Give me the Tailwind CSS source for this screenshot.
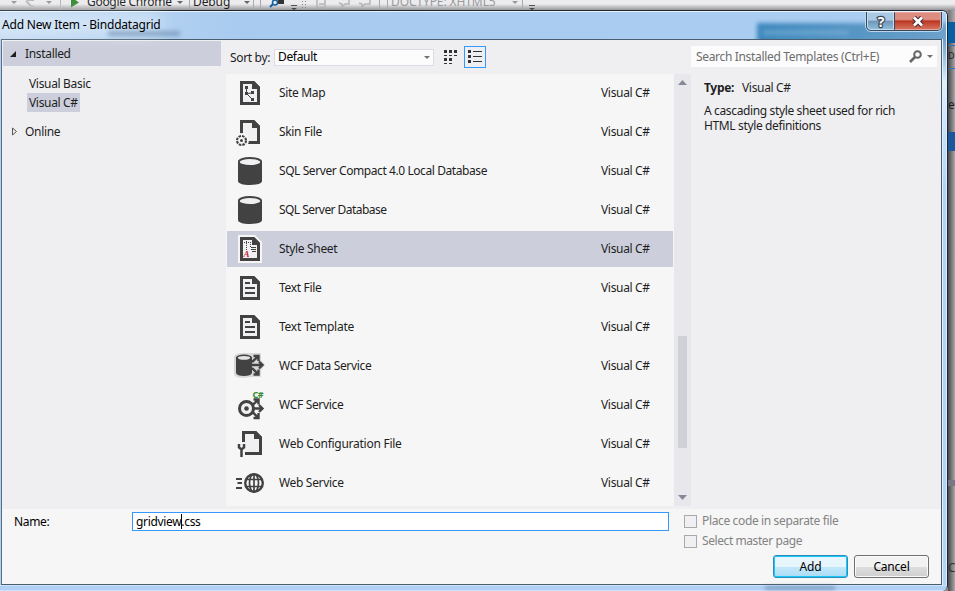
<!DOCTYPE html>
<html lang="en">
<head>
    <meta charset="UTF-8">
    <meta name="viewport" content="width=device-width, initial-scale=1.0">
    <title>Add New Item - Binddatagrid</title>
    <script src="https://cdn.jsdelivr.net/npm/@tailwindcss/browser@4"></script>
</head>
<body class="h-[591px] w-[955px] overflow-hidden bg-[#8e8e90] font-['Noto_Sans','Open_Sans',sans-serif] text-[12px] leading-4 tracking-[-0.33px] text-[#1e1e1e]">
    <!-- shared icon shapes -->
    <svg class="hidden">
        <defs>
            <g id="doc">
                <path d="M9.5 7.5H21.5L26.5 12.5V28.5H9.5Z" fill="#f0eff1" stroke="#424242" stroke-width="3"/>
                <path d="M20 6H22L28 12V14H20Z" fill="#424242"/>
            </g>
            <g id="db">
                <path d="M6 8V28C6 30.5 11 32 18 32S30 30.5 30 28V8Z" fill="#424242"/>
                <ellipse cx="18" cy="8.5" rx="12" ry="4.5" fill="#424242"/>
                <ellipse cx="18" cy="9" rx="10.3" ry="3" fill="#f0eff1"/>
            </g>
            <g id="arrows" fill="none" stroke="#424242" stroke-width="2.4">
                <path d="M20 17H30M27 13.5L30.5 17L27 20.5M20 14L26 8.5M21.5 8H26.5V13M20 20L26 26M21.5 26.5H26.5V21.5"/>
            </g>
            <g id="textdoc">
                <use href="#doc"/>
                <path d="M13 13H18M13 18H23M13 23H23" stroke="#424242" stroke-width="2"/>
            </g>
        </defs>
    </svg>

    <!-- IDE toolbar behind the dialog -->
    <div class="flex h-[10px] items-start overflow-hidden bg-linear-to-b from-[#ececee] from-40% to-[#98989a]">
        <svg class="h-[10px] w-[70px] shrink-0" viewBox="0 0 70 10"><path d="M11 1H17L14 4ZM46 1H52L49 4Z" fill="#99999b"/><path d="M26 1L31 6L34 7M27 0H34" fill="none" stroke="#b9b9bb" stroke-width="2"/><path d="M60.500 0V10" stroke="#b5b5b7"/></svg>
        <svg class="h-[10px] w-[17px] shrink-0" viewBox="0 0 17 10"><path d="M1 -3V7.500L9 2.500Z" fill="#388a34"/></svg>
        <span class="-mt-[6px] w-[89px] shrink-0 tracking-[-0.3px]">Google Chrome</span>
        <svg class="h-[10px] w-[17px] shrink-0" viewBox="0 0 17 10"><path d="M1 1H7L4 4Z" fill="#666"/><path d="M13.500 0V9" stroke="#a9a9ab"/></svg>
        <span class="-mt-[6px] w-[49px] shrink-0 tracking-[-0.1px]">Debug</span>
        <svg class="h-[10px] w-[148px] shrink-0" viewBox="0 0 148 10">
            <path d="M2 1H8L5 4Z" fill="#666"/><path d="M11.500 0V9M18.500 0V9M137.500 0V10M145.500 0V10" stroke="#a9a9ab"/>
            <path d="M36 0H42V4H36Z" fill="#333"/><circle cx="33" cy="2.500" r="2.500" fill="none" stroke="#15609e" stroke-width="1.500"/><path d="M31 4L28 7" stroke="#15609e" stroke-width="2"/>
            <path d="M49 5.500H55" stroke="#555"/><path d="M49 8H55L52 10Z" fill="#444"/>
            <path d="M60.500 1V10M63.500 1V10" stroke="#888" stroke-dasharray="1 2"/>
            <path d="M75 0V7.500H83V0M77 4H82M97 3L100 4V7L103 4H107V0M117 3L120 4V7L123 4H128V0" fill="none" stroke="#b4b4b6" stroke-width="1.500"/>
        </svg>
        <span class="-mt-[6px] w-[120px] shrink-0 pl-px tracking-[-0.1px] text-[#9a9a9c]">DOCTYPE: XHTML5</span>
        <svg class="h-[10px] w-[40px] shrink-0" viewBox="0 0 40 10"><path d="M2 1H8L5 4Z" fill="#999"/><path d="M12.500 0V10" stroke="#a9a9ab"/><path d="M19 5.500H25" stroke="#555"/><path d="M19 8H25L22 10Z" fill="#444"/></svg>
    </div>

    <div class="flex h-[581px]">
        <!-- dialog window -->
        <div class="flex w-[948px] shrink-0 flex-col rounded-tr-[6px] rounded-br-[6px] border-t border-r border-[#1c2530] bg-[#b0d1f5]">
            <div class="flex h-[28px] shrink-0 rounded-tr-[5px] border-t border-r border-[#e8f3fe] bg-linear-to-r from-[#c3dbf4] via-[#a9cbef] via-25% to-[#aacdf2] text-black">
                <div class="relative w-[753px] pt-[5px] pl-[2px] tracking-[-0.2px]">
                    <div class="absolute top-0 -left-3 h-6 w-44 rounded-full bg-white/35 blur-[8px]"></div>
                    <div class="absolute top-[19px] left-[108px] h-[5px] w-[72px] bg-[#5d7ea2]/55 blur-[2px]"></div>
                    <span class="relative">Add New Item - Binddatagrid</span>
                </div>
                <div class="relative flex grow justify-end overflow-hidden rounded-tr-[5px]">
                    <div class="absolute top-[11px] left-[4px] h-5 w-[192px] bg-linear-to-r from-[#3d88bd] to-[#6da2cb] blur-[2px]"></div>
                    <div class="absolute top-[18px] left-[10px] h-[5px] w-[86px] bg-[#8bbddd]/45 blur-[2px]"></div>
                    <div class="relative mr-[4px] flex h-[19px] rounded-b-[5px] border border-t-0 border-[#35475a] shadow-[0_0_0_1px_#b9d8f0]">
                        <div class="flex w-[27px] justify-center rounded-bl-[4px] border border-[#c6ddef] bg-linear-to-b from-[#aac9e5] from-45% via-[#7195b6] via-50% to-[#8dbbdc]">
                            <svg class="h-[16px] w-[14px]" viewBox="0 0 14 16"><text x="7" y="13.500" text-anchor="middle" font-size="14" font-weight="bold" fill="#fff" stroke="#3c4653" stroke-width="2.400" paint-order="stroke">?</text></svg>
                        </div>
                        <div class="flex w-[47px] justify-center rounded-br-[4px] border border-[#e5a79d] border-l-[#35475a] bg-linear-to-b from-[#dd8d80] from-40% via-[#bb3422] via-50% to-[#d5705b]">
                            <svg class="h-[16px] w-[16px]" viewBox="0 0 16 16"><path d="M4 4.500L12 12.500M12 4.500L4 12.500" stroke="#4a3038" stroke-width="5"/><path d="M4 4.500L12 12.500M12 4.500L4 12.500" stroke="#fff" stroke-width="2.700"/></svg>
                        </div>
                    </div>
                </div>
            </div>

            <div class="flex">
                <div class="flex h-[546px] w-[941px] flex-col border border-l-[#5b6d80] border-[#4a5d70] ml-px bg-[#efeff2]">
                    <div class="flex h-[469px] shrink-0">
                        <!-- categories -->
                        <div class="w-[224px] shrink-0 pt-px pl-px">
                            <div class="flex h-[25px] w-[218px] items-center bg-[#cccedb]">
                                <svg class="ml-[7px] h-[8px] w-[15px]" viewBox="0 0 15 8"><path d="M0 7L6 1V7Z" fill="#1e1e1e"/></svg>
                                <span>Installed</span>
                            </div>
                            <div class="mt-[9px] ml-[24px] flex flex-col items-start">
                                <span class="h-[18px] px-[2px] leading-[18px]">Visual Basic</span>
                                <span class="h-[19px] bg-[#cccedb] px-[2px] leading-[19px]">Visual C#</span>
                            </div>
                            <div class="mt-[12px] flex items-center pl-[9px]">
                                <svg class="h-[10px] w-[13px]" viewBox="0 0 13 10"><path d="M.5 1V8L4.500 4.500Z" fill="none" stroke="#555"/></svg>
                                <span>Online</span>
                            </div>
                        </div>

                        <!-- template list -->
                        <div class="w-[465px] shrink-0">
                            <div class="flex h-[34px] items-center">
                                <span class="ml-[4px] w-[44px] shrink-0 pt-px">Sort by:</span>
                                <div class="flex h-[17px] w-[160px] items-center justify-between border border-[#dcdce8] bg-[#fcfcfc] pr-[3px] pl-[3px] text-black">
                                    <span>Default</span>
                                    <svg class="h-[3px] w-[6px]" viewBox="0 0 6 3"><path d="M0 0H6L3 3Z" fill="#717171"/></svg>
                                </div>
                                <svg class="ml-[9px] h-[14px] w-[14px]" viewBox="0 0 14 14" shape-rendering="crispEdges"><path d="M1 0H4V3H1ZM6 0H9V3H6ZM11 0H14V3H11ZM1 5H4V6H1ZM6 5H9V6H6ZM11 5H14V6H11ZM1 8H4V11H1ZM6 8H9V11H6ZM1 13H4V14H1ZM6 13H9V14H6Z" fill="#333"/></svg>
                                <div class="ml-[7px] flex h-[22px] w-[22px] items-center justify-center border border-[#3399ff]">
                                    <svg class="h-[14px] w-[14px]" viewBox="0 0 14 14" shape-rendering="crispEdges"><path d="M0 0H3V3H0ZM5 1H14V2H5ZM0 5H3V8H0ZM5 6H14V7H5ZM0 10H3V13H0ZM5 11H14V12H5Z" fill="#333"/></svg>
                                </div>
                            </div>
                            <div class="flex h-[432px]">
                                <div class="flex w-[448px] flex-col gap-[3px] bg-[#f6f6f6] px-px pt-px">
                                    <div class="flex h-[36px] shrink-0 items-center">
                                        <svg class="ml-[5px] h-[36px] w-[36px]" viewBox="0 0 36 36"><use href="#doc"/><path d="M14.500 12.500V18.500L20 24M15 18.500L21 18" fill="none" stroke="#424242"/><path d="M13 11H16V14H13ZM13 17H16V20H13ZM19 16H22V19H19ZM19 23H22V26H19Z" fill="#424242"/></svg>
                                        <span class="ml-[11px] w-[322px]">Site Map</span><span>Visual C#</span>
                                    </div>
                                    <div class="flex h-[36px] shrink-0 items-center">
                                        <svg class="ml-[5px] h-[36px] w-[36px]" viewBox="0 0 36 36"><use href="#doc"/><circle cx="9.500" cy="26.500" r="7.500" fill="#f6f6f6"/><circle cx="9.500" cy="26.500" r="4.500" fill="none" stroke="#424242" stroke-width="2.200" stroke-dasharray="2.500 1.030"/><circle cx="9.500" cy="26.500" r="1.500" fill="#424242"/></svg>
                                        <span class="ml-[11px] w-[322px]">Skin File</span><span>Visual C#</span>
                                    </div>
                                    <div class="flex h-[36px] shrink-0 items-center">
                                        <svg class="ml-[5px] h-[36px] w-[36px]" viewBox="0 0 36 36"><use href="#db"/></svg>
                                        <span class="ml-[11px] w-[322px] tracking-[-0.42px]">SQL Server Compact 4.0 Local Database</span><span>Visual C#</span>
                                    </div>
                                    <div class="flex h-[36px] shrink-0 items-center">
                                        <svg class="ml-[5px] h-[36px] w-[36px]" viewBox="0 0 36 36"><use href="#db"/></svg>
                                        <span class="ml-[11px] w-[322px] tracking-[-0.55px]">SQL Server Database</span><span>Visual C#</span>
                                    </div>
                                    <div class="flex h-[36px] shrink-0 items-center bg-[#cccedb]">
                                        <svg class="ml-[5px] h-[36px] w-[36px]" viewBox="0 0 36 36"><path d="M6 4H23L30 11V32H6Z" fill="#f6f6f6"/><use href="#doc"/><path d="M12 11.500H19M14.500 10V20M18.500 13V17" stroke="#424242" stroke-dasharray="1 1"/><path d="M19 16.500H24M19 18.500H24M20 20.500H24" stroke="#424242"/><text x="11.500" y="26" font-family="Liberation Serif, serif" font-size="9" font-weight="bold" font-style="italic" letter-spacing="0" fill="#c4243c">A</text></svg>
                                        <span class="ml-[11px] w-[322px]">Style Sheet</span><span>Visual C#</span>
                                    </div>
                                    <div class="flex h-[36px] shrink-0 items-center">
                                        <svg class="ml-[5px] h-[36px] w-[36px]" viewBox="0 0 36 36"><use href="#textdoc"/></svg>
                                        <span class="ml-[11px] w-[322px]">Text File</span><span>Visual C#</span>
                                    </div>
                                    <div class="flex h-[36px] shrink-0 items-center">
                                        <svg class="ml-[5px] h-[36px] w-[36px]" viewBox="0 0 36 36"><use href="#textdoc"/></svg>
                                        <span class="ml-[11px] w-[322px] tracking-[-0.25px]">Text Template</span><span>Visual C#</span>
                                    </div>
                                    <div class="flex h-[36px] shrink-0 items-center">
                                        <svg class="ml-[5px] h-[36px] w-[36px]" viewBox="0 0 36 36"><path d="M2 8Q4 5 12 5H29V12L33 17L29 22V29H20L12 30Q3 30 2 26Z" fill="#d8d8d8"/><path d="M4 9V25Q5 28 12 28T20 25V9Z" fill="#424242"/><ellipse cx="12" cy="9.500" rx="8" ry="3" fill="#424242"/><ellipse cx="12" cy="9.800" rx="6.200" ry="1.900" fill="#e4e4e4"/><use href="#arrows"/></svg>
                                        <span class="ml-[11px] w-[322px]">WCF Data Service</span><span>Visual C#</span>
                                    </div>
                                    <div class="flex h-[36px] shrink-0 items-center">
                                        <svg class="ml-[5px] h-[36px] w-[36px]" viewBox="0 0 36 36"><circle cx="14.500" cy="21.500" r="7" fill="#f0eff1" stroke="#424242" stroke-width="3"/><circle cx="14.500" cy="21.500" r="2.300" fill="#424242"/><use href="#arrows" y="4.500"/><text x="20.500" y="11" font-size="9" font-weight="bold" letter-spacing="-0.500" fill="#388a34">C#</text></svg>
                                        <span class="ml-[11px] w-[322px]">WCF Service</span><span>Visual C#</span>
                                    </div>
                                    <div class="flex h-[36px] shrink-0 items-center">
                                        <svg class="ml-[5px] h-[36px] w-[36px]" viewBox="0 0 36 36"><use href="#doc" x="2" y="-1"/><path d="M5 16H13V32H5Z" fill="#f6f6f6"/><path d="M7 18V21.500L9.500 23.500L12 21.500V18M9.500 23V31" fill="none" stroke="#424242" stroke-width="2.500"/></svg>
                                        <span class="ml-[11px] w-[322px] tracking-[-0.26px]">Web Configuration File</span><span>Visual C#</span>
                                    </div>
                                    <div class="flex h-[36px] shrink-0 items-center">
                                        <svg class="ml-[5px] h-[36px] w-[36px]" viewBox="0 0 36 36"><g fill="none" stroke="#424242" stroke-width="2.400"><circle cx="22" cy="18" r="8.800"/><ellipse cx="22" cy="18" rx="4.500" ry="9" stroke-width="1.700"/><path d="M22 9V27M14 14.500H30M14 21.500H30" stroke-width="1.700"/><path d="M4 14H10M5.500 18H10M4 23H10" stroke-width="2"/></g></svg>
                                        <span class="ml-[11px] w-[322px]">Web Service</span><span>Visual C#</span>
                                    </div>
                                </div>
                                <!-- scrollbar -->
                                <div class="flex w-[17px] flex-col items-center bg-[#e8e8ec]">
                                    <svg class="mt-[6px] h-[5px] w-[9px]" viewBox="0 0 9 5"><path d="M0 5L4.500 0L9 5Z" fill="#868999"/></svg>
                                    <div class="mt-[251px] h-[112px] w-[9px] bg-[#d0d1d7]"></div>
                                    <svg class="mt-[47px] h-[5px] w-[9px]" viewBox="0 0 9 5"><path d="M0 0H9L4.500 5Z" fill="#868999"/></svg>
                                </div>
                            </div>
                        </div>

                        <!-- search and description -->
                        <div class="grow pt-[6px]">
                            <div class="flex h-[21px] w-[246px] items-center bg-[#fcfcfc] pl-[5px] text-[#6d6d6d]">
                                <span class="w-[213px] shrink-0 pt-px">Search Installed Templates (Ctrl+E)</span>
                                <svg class="h-[13px] w-[14px] shrink-0" viewBox="0 0 14 13"><circle cx="8.500" cy="4.500" r="3.300" fill="none" stroke="#666" stroke-width="2"/><path d="M6 7L1 12" stroke="#666" stroke-width="2.700"/></svg>
                                <svg class="ml-[4px] h-[3px] w-[6px] shrink-0" viewBox="0 0 6 3"><path d="M0 0H6L3 3Z" fill="#717171"/></svg>
                            </div>
                            <div class="mt-[13px] flex pl-[13px]"><span class="w-[38px] font-bold">Type:</span><span>Visual C#</span></div>
                            <p class="mt-[7px] pl-[13px] leading-[15px] tracking-[-0.36px]">A cascading style sheet used for rich<br>HTML style definitions</p>
                        </div>
                    </div>

                    <!-- name and buttons -->
                    <div class="flex grow bg-[#f6f6f6] text-black">
                        <span class="w-[130px] shrink-0 pt-[5px] pl-[12px]">Name:</span>
                        <div class="mt-[3px] flex h-[19px] w-[537px] shrink-0 items-center border border-[#3399ff] bg-white pl-[3px]">
                            <span>gridview</span><span class="-mr-px h-[15px] w-px bg-black"></span><span>.css</span>
                        </div>
                        <div class="ml-[15px] w-[246px] pt-[4px] text-[#838383]">
                            <div class="flex h-[16px] items-center gap-[5px]"><span class="h-[13px] w-[13px] border border-[#a9a9a9] bg-[#f0f0f2]"></span><span class="tracking-[-0.36px]">Place code in separate file</span></div>
                            <div class="mt-[4px] flex h-[16px] items-center gap-[5px]"><span class="h-[13px] w-[13px] border border-[#a9a9a9] bg-[#f0f0f2]"></span><span class="tracking-[-0.42px]">Select master page</span></div>
                            <div class="mt-[6px] flex gap-[6px] pl-[89px] text-black">
                                <button class="h-[23px] w-[75px] shrink-0 rounded-[3px] border border-[#2c8fb9] bg-linear-to-b from-[#e7f5fd] from-50% via-[#c4e7fa] via-52% to-[#a9dcf5] leading-[19px] tracking-[-0.1px] shadow-[inset_0_0_0_1px_#18c6fa]">Add</button>
                                <button class="h-[23px] w-[75px] shrink-0 rounded-[3px] border border-[#707070] bg-linear-to-b from-[#f2f2f2] from-50% via-[#dedede] via-52% to-[#cfcfcf] leading-[19px] tracking-[-0.2px] shadow-[inset_0_0_0_1px_#fafafa]">Cancel</button>
                            </div>
                        </div>
                    </div>
                </div>
                <!-- glass frame edge -->
                <div class="h-[546px] w-[5px] border-x border-[#deeffd] bg-linear-to-b from-[#709fc5] via-[#e0effb] via-8% to-[#b1d3f6] to-27%"></div>
            </div>
            <div class="flex h-[6px] justify-end rounded-br-[5px] border-y border-[#cce5fd] pr-[112px]">
                <div class="h-[4px] w-[70px] bg-[#55799d]/60 blur-[2px]"></div>
            </div>
        </div>

        <!-- IDE panels showing right of the dialog -->
        <div class="w-[7px] shrink-0 overflow-hidden bg-linear-to-r from-[#4a4a4c] to-[#a9a9ab]">
            <div class="h-[12px] bg-[#b5b5b7]/40"></div>
            <div class="h-[21px] bg-[#075f9f]"></div>
            <div class="mt-[2px] h-[24px] border-y border-[#2a73b8] text-[9px] leading-[20px]">D</div>
            <div class="mt-[28px] h-[16px] leading-[16px]">e</div>
            <div class="mt-[19px] h-[19px] bg-[#1c579d]"></div>
            <div class="mt-[329px] h-[6px] bg-[#777785]"></div>
            <div class="mt-[74px] h-[16px] text-[#333]">C</div>
        </div>
    </div>
</body>
</html>
